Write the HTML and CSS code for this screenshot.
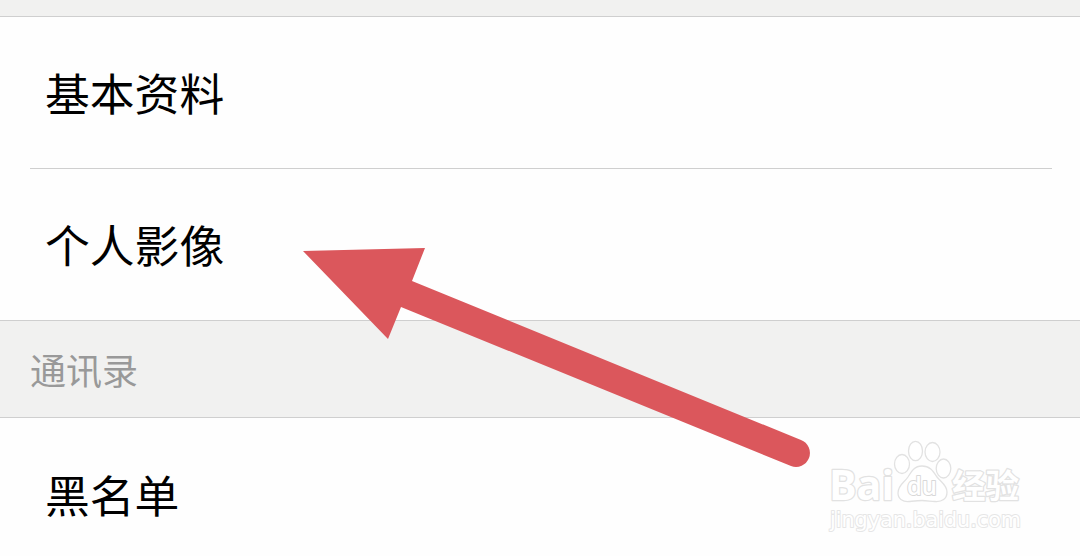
FILE: index.html
```
<!DOCTYPE html>
<html lang="zh-CN">
<head>
  <meta charset="UTF-8" />
  <title>设置</title>
  <link rel="stylesheet" href="styles.css">
</head>
<body>

  <div class="page">
    <div class="gap"></div>
    <div class="group">
      <div class="row">基本资料</div>
      <div class="divider"></div>
      <div class="row">个人影像</div>
    </div>
    <div class="section">通讯录</div>
    <div class="group">
      <div class="row last">黑名单</div>
    </div>

    <!-- Arrow -->
    <svg class="arrow" width="1080" height="556" viewBox="0 0 1080 556">
      <path d="M303 251 L425 248 L412 281 L801 440 A13.7 13.7 0 0 1 791 466 L401 307 L388 339 Z" />
    </svg>

    <!-- Watermark -->
    <svg class="watermark" width="210" height="120" viewBox="0 0 210 120">
      <text class="brand" x="9" y="70" textLength="65" lengthAdjust="spacingAndGlyphs">Bai</text>
      <ellipse cx="82" cy="34" rx="7.5" ry="9.5" />
      <ellipse cx="95.5" cy="21" rx="7" ry="9.7" />
      <ellipse cx="112.5" cy="22" rx="7.5" ry="9.5" />
      <ellipse cx="123.5" cy="38.5" rx="7.3" ry="9.5" />
      <path d="M102 36 C94 36 91 42 88 47 C84 53 78 55 78 63 C78 69 83 72 89 71.5 C94 71 98 70.5 102 70.5 C107 70.5 111 71.5 115 71.5 C122 72 127 69 127 62 C127 55 121 52 117 47 C113 41 110 36 102 36 Z" />
      <text class="du" x="87" y="65" textLength="30" lengthAdjust="spacingAndGlyphs">du</text>
      <text class="jingyan" x="132" y="68" textLength="67" lengthAdjust="spacingAndGlyphs">经验</text>
      <text class="url" x="10" y="97" textLength="191" lengthAdjust="spacingAndGlyphs">jingyan.baidu.com</text>
    </svg>
  </div>

</body>
</html>
```
FILE: styles.css
```
body {
  margin: 0;
  background: #fefefe;
  color: #000;
  font-family: 'Noto Sans CJK SC', sans-serif;
  overflow: hidden;
}

.page {
  position: relative;
  height: 556px;
  overflow: hidden;
}

.gap {
  height: 16px;
  background: #f1f1f0;
}

.group {
  border-top: 1px solid #cfcfcf;
}

.row {
  display: flex;
  align-items: center;
  height: 151px;
  padding: 0 45px 1px;
  box-sizing: border-box;
  font-size: 44.8px;
  line-height: 60px;
}

.row.last {
  padding-top: 2px;
}

.divider {
  height: 1px;
  margin: 0 28px 0 30px;
  background: #cfcfcf;
}

.section {
  display: flex;
  align-items: center;
  height: 97px;
  padding: 0 30px;
  box-sizing: border-box;
  border-top: 1px solid #cfcfcf;
  background: #f1f1f0;
  color: #999;
  font-size: 36px;
  line-height: 48px;
}

.arrow {
  position: absolute;
  top: 0;
  left: 0;
  fill: #db575c;
}

.watermark {
  position: absolute;
  top: 430px;
  left: 820px;
  fill: #fff;
  stroke: #e2e2e2;
  stroke-width: 1.3;
  stroke-linejoin: round;
}

.watermark text {
  paint-order: stroke;
  stroke-width: 2.5;
}

.brand {
  font: bold 42px 'Open Sans', sans-serif;
}

.watermark .du {
  font: 600 25px 'Open Sans', sans-serif;
  stroke: #d8d8d8;
  stroke-width: 2;
}

.jingyan {
  font: bold 33px 'Noto Sans CJK SC', sans-serif;
}

.watermark .url {
  font: 21px 'DejaVu Sans', sans-serif;
  stroke: #e6e6e6;
  stroke-width: 2;
}
```
